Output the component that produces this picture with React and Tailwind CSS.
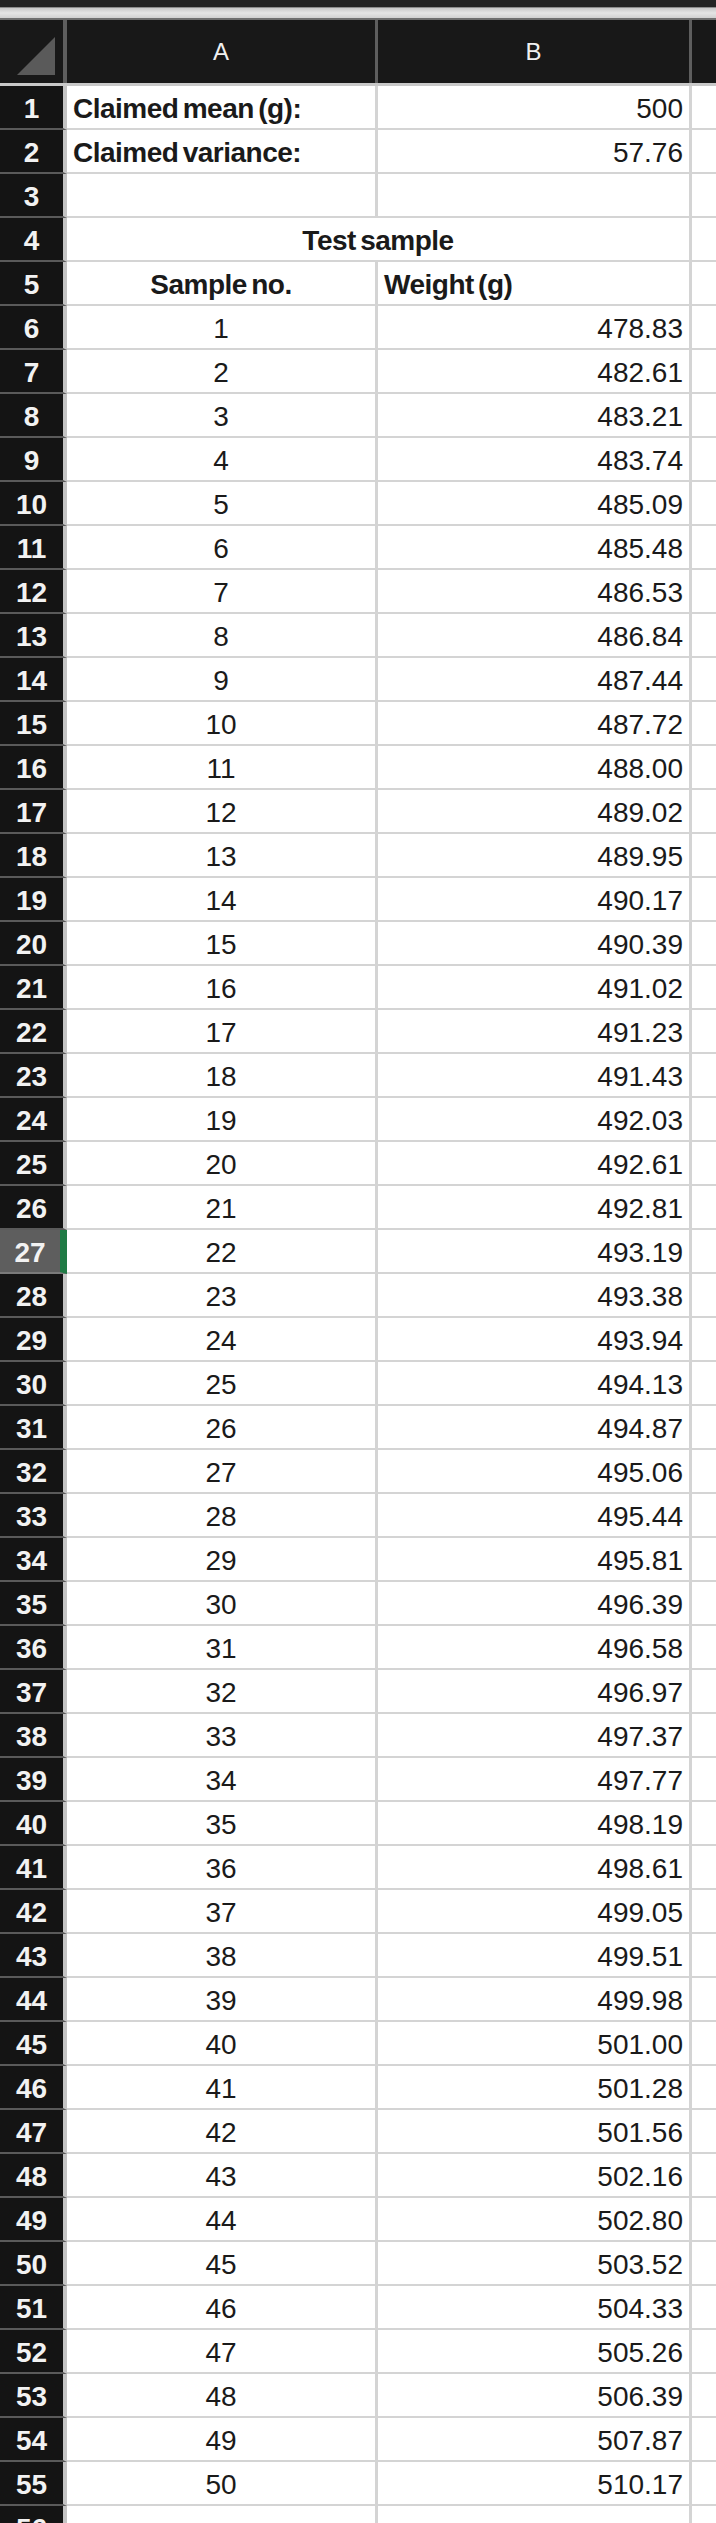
import React from "react";

const weights = [
  "478.83", "482.61", "483.21", "483.74", "485.09", "485.48", "486.53", "486.84", "487.44", "487.72",
  "488.00", "489.02", "489.95", "490.17", "490.39", "491.02", "491.23", "491.43", "492.03", "492.61",
  "492.81", "493.19", "493.38", "493.94", "494.13", "494.87", "495.06", "495.44", "495.81", "496.39",
  "496.58", "496.97", "497.37", "497.77", "498.19", "498.61", "499.05", "499.51", "499.98", "501.00",
  "501.28", "501.56", "502.16", "502.80", "503.52", "504.33", "505.26", "506.39", "507.87", "510.17",
];

const SELECTED_ROW = 27;

const font = { fontFamily: '"Liberation Sans", Arial, sans-serif' };

function RowHead({ n }) {
  const selected = n === SELECTED_ROW;
  return (
    <div
      className={
        "h-full shrink-0 flex items-start justify-center border-b-2 pt-[4px] text-[28px] leading-[38px] font-bold text-[#f2f2f2] " +
        (selected
          ? "w-[67px] bg-[#5e5e5e] border-b-[#7a7a7a] border-r-[7px] border-r-[#1f7a45]"
          : "w-[67px] bg-[#141414] border-b-[#5a5a5a] border-r-4 border-r-[#c4c4c4]")
      }
    >
      {n}
    </div>
  );
}

function Cell({ w, align = "left", bold = false, children }) {
  const justify =
    align === "center" ? "justify-center" : align === "right" ? "justify-end pr-[6px]" : "justify-start pl-[6px]";
  return (
    <div
      className={
        w +
        " h-full shrink-0 flex items-start pt-[4px] border-r-[3px] border-b-2 border-[#d4d4d4] text-[28px] leading-[38px] text-[#1a1a1a] whitespace-nowrap " +
        justify +
        (bold ? " font-bold tracking-[-0.5px] [word-spacing:-3px]" : "")
      }
    >
      {children}
    </div>
  );
}

function Row({ n, children }) {
  return (
    <div className="flex h-[44px] bg-white">
      <RowHead n={n} />
      {children}
      <div className="flex-1 h-full border-b-2 border-[#d4d4d4]" />
    </div>
  );
}

export default function App() {
  return (
    <div className="w-[716px] h-[2523px] overflow-hidden bg-white" style={font}>
      {/* window chrome strip above the sheet */}
      <div className="h-[20px] flex flex-col">
        <div className="h-[7px] bg-[#232323]" />
        <div className="h-[1px] bg-[#8c8c8c]" />
        <div className="h-[10px] bg-gradient-to-b from-[#c8c8c8] via-[#e4e4e4] to-[#d0d0d0]" />
        <div className="h-[2px] bg-[#6e6e6e]" />
      </div>

      {/* column headers */}
      <div className="flex h-[66px] border-b-[3px] border-[#c8c8c8] bg-[#181818]">
        <div className="w-[67px] h-full shrink-0 border-r-4 border-[#5e5e5e] relative">
          <svg className="absolute left-0 top-0" width="63" height="63" viewBox="0 0 63 63">
            <polygon points="17,55 55,17 55,55" fill="#5a5a5a" />
          </svg>
        </div>
        <div className="w-[311px] h-full shrink-0 border-r-[3px] border-[#5e5e5e] flex items-center justify-center text-[24px] text-[#f0f0f0]">
          A
        </div>
        <div className="w-[314px] h-full shrink-0 border-r-[3px] border-[#5e5e5e] flex items-center justify-center text-[24px] text-[#f0f0f0]">
          B
        </div>
        <div className="flex-1 h-full" />
      </div>

      <Row n={1}>
        <Cell w="w-[311px]" bold>Claimed mean (g):</Cell>
        <Cell w="w-[314px]" align="right">500</Cell>
      </Row>
      <Row n={2}>
        <Cell w="w-[311px]" bold>Claimed variance:</Cell>
        <Cell w="w-[314px]" align="right">57.76</Cell>
      </Row>
      <Row n={3}>
        <Cell w="w-[311px]" />
        <Cell w="w-[314px]" />
      </Row>
      <Row n={4}>
        <Cell w="w-[625px]" align="center" bold>Test sample</Cell>
      </Row>
      <Row n={5}>
        <Cell w="w-[311px]" align="center" bold>Sample no.</Cell>
        <Cell w="w-[314px]" bold>Weight (g)</Cell>
      </Row>
      {weights.map((wt, i) => (
        <Row key={i} n={i + 6}>
          <Cell w="w-[311px]" align="center">{i + 1}</Cell>
          <Cell w="w-[314px]" align="right">{wt}</Cell>
        </Row>
      ))}
      <Row n={56}>
        <Cell w="w-[311px]" />
        <Cell w="w-[314px]" />
      </Row>
    </div>
  );
}
